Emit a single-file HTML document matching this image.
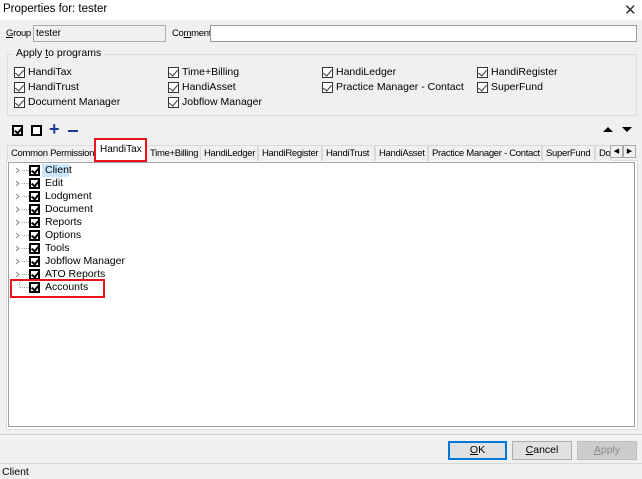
<!DOCTYPE html>
<html><head><style>
*{margin:0;padding:0;box-sizing:border-box}
body{width:642px;height:479px;background:#f0f0f0;font-family:"Liberation Sans",sans-serif;font-size:10.5px;color:#000;position:relative;overflow:hidden}
.a{position:absolute;white-space:nowrap}
.cb{position:absolute;width:11px;height:11px;border:1px solid #333;background:#fff}
.cb::after{content:"";position:absolute;left:2px;top:0px;width:4px;height:7px;border:solid #333;border-width:0 1px 1px 0;transform:rotate(40deg)}
.tc{position:absolute;width:11px;height:11px;border:2px solid #000;background:#fff}
.tc::after{content:"";position:absolute;left:2px;top:-1px;width:3px;height:6px;border:solid #000;border-width:0 2px 2px 0;transform:rotate(40deg)}
.tab{position:absolute;top:145px;height:16px;border:1px solid #d9d9d9;border-bottom:none;background:#f0f0f0;padding:2px 3px;font-size:9.5px;white-space:nowrap;overflow:hidden;letter-spacing:-0.3px}
.btn{position:absolute;top:441px;height:19px;border:1px solid #adadad;background:#e1e1e1;text-align:center;line-height:17px}
</style></head><body>
<div class="a" style="left:0;top:0;width:642px;height:20px;background:#fff"></div>
<div class="a" style="left:3px;top:3px;font-size:11.5px">Properties for: tester</div>
<div class="a" style="left:624px;top:1px;font-size:15px;color:#333">✕</div>

<div class="a" style="left:6px;top:28px;font-size:9.5px;letter-spacing:-0.3px"><u>G</u>roup</div>
<div class="a" style="left:33px;top:25px;width:133px;height:17px;border:1px solid #aaa;background:#f0f0f0;padding:2px 2px;font-size:10px">tester</div>
<div class="a" style="left:172px;top:28px;font-size:9.5px;letter-spacing:-0.3px">Co<u>m</u>ment</div>
<div class="a" style="left:210px;top:25px;width:427px;height:17px;border:1px solid #999;background:#fff"></div>

<div class="a" style="left:7px;top:54px;width:630px;height:62px;border:1px solid #dcdcdc"></div>
<div class="a" style="left:13px;top:47px;background:#f0f0f0;padding:0 3px">Apply <u>t</u>o programs</div>

<div class="cb" style="left:14px;top:67px"></div><div class="a" style="left:28px;top:66px">HandiTax</div>
<div class="cb" style="left:14px;top:82px"></div><div class="a" style="left:28px;top:81px">HandiTrust</div>
<div class="cb" style="left:14px;top:97px"></div><div class="a" style="left:28px;top:96px">Document Manager</div>
<div class="cb" style="left:168px;top:67px"></div><div class="a" style="left:182px;top:66px">Time+Billing</div>
<div class="cb" style="left:168px;top:82px"></div><div class="a" style="left:182px;top:81px">HandiAsset</div>
<div class="cb" style="left:168px;top:97px"></div><div class="a" style="left:182px;top:96px">Jobflow Manager</div>
<div class="cb" style="left:322px;top:67px"></div><div class="a" style="left:336px;top:66px">HandiLedger</div>
<div class="cb" style="left:322px;top:82px"></div><div class="a" style="left:336px;top:81px">Practice Manager - Contact</div>
<div class="cb" style="left:477px;top:67px"></div><div class="a" style="left:491px;top:66px">HandiRegister</div>
<div class="cb" style="left:477px;top:82px"></div><div class="a" style="left:491px;top:81px">SuperFund</div>

<div class="tc" style="left:12px;top:125px"></div>
<div class="a" style="left:31px;top:125px;width:11px;height:11px;border:2px solid #000;background:#fff"></div>
<div class="a" style="left:49px;top:119px;font-size:18px;font-weight:bold;color:#1a3a9a">+</div>
<div class="a" style="left:68px;top:130px;width:10px;height:2px;background:#1a3a9a"></div>
<svg class="a" style="left:603px;top:126px" width="30" height="8"><path d="M0 6 L5 1 L10 6Z M19 1 L29 1 L24 6Z" fill="#000"/></svg>

<div class="a" style="left:6px;top:160px;width:632px;height:270px;border:1px solid #dadada;background:#fff"></div>
<div class="a" style="left:8px;top:162px;width:627px;height:265px;border:1px solid #a0a0a0;background:#fff"></div>

<div class="tab" style="left:7px;width:89px">Common Permissions</div>
<div class="tab" style="left:146px;width:55px">Time+Billing</div>
<div class="tab" style="left:200px;width:58px">HandiLedger</div>
<div class="tab" style="left:258px;width:64px">HandiRegister</div>
<div class="tab" style="left:322px;width:53px">HandiTrust</div>
<div class="tab" style="left:375px;width:53px">HandiAsset</div>
<div class="tab" style="left:428px;width:114px">Practice Manager - Contact</div>
<div class="tab" style="left:542px;width:53px">SuperFund</div>
<div class="tab" style="left:595px;width:16px">Do</div>
<div class="a" style="left:610px;top:145px;width:13px;height:13px;border:1px solid #aaa;background:#f0f0f0;font-size:7px;text-align:center;line-height:11px">◀</div>
<div class="a" style="left:623px;top:145px;width:13px;height:13px;border:1px solid #aaa;background:#f0f0f0;font-size:7px;text-align:center;line-height:11px">▶</div>
<div class="a" style="left:96px;top:140px;width:50px;height:22px;background:#fff;padding:4px 4px;font-size:10px">HandiTax</div>
<div class="a" style="left:94px;top:138px;width:53px;height:24px;border:2px solid #e8141c"></div>

<div class="a" style="left:42px;top:164px;width:27px;height:13px;background:#cce8ff"></div>
<svg class="a" style="left:12px;top:164px" width="20" height="130"><g stroke="#888" fill="none"><path d="M4 4l3 2.5-3 2.5M4 17l3 2.5-3 2.5M4 30l3 2.5-3 2.5M4 43l3 2.5-3 2.5M4 56l3 2.5-3 2.5M4 69l3 2.5-3 2.5M4 82l3 2.5-3 2.5M4 95l3 2.5-3 2.5M4 108l3 2.5-3 2.5"/></g><g stroke="#a0a0a0" stroke-dasharray="1 1" fill="none"><path d="M10 6.5H17M10 19.5H17M10 32.5H17M10 45.5H17M10 58.5H17M10 71.5H17M10 84.5H17M10 97.5H17M10 110.5H17M7.5 116V123.5H17"/></g></svg>
<div class="tc" style="left:29px;top:165px"></div><div class="a" style="left:45px;top:164px">Client</div>
<div class="tc" style="left:29px;top:178px"></div><div class="a" style="left:45px;top:177px">Edit</div>
<div class="tc" style="left:29px;top:191px"></div><div class="a" style="left:45px;top:190px">Lodgment</div>
<div class="tc" style="left:29px;top:204px"></div><div class="a" style="left:45px;top:203px">Document</div>
<div class="tc" style="left:29px;top:217px"></div><div class="a" style="left:45px;top:216px">Reports</div>
<div class="tc" style="left:29px;top:230px"></div><div class="a" style="left:45px;top:229px">Options</div>
<div class="tc" style="left:29px;top:243px"></div><div class="a" style="left:45px;top:242px">Tools</div>
<div class="tc" style="left:29px;top:256px"></div><div class="a" style="left:45px;top:255px">Jobflow Manager</div>
<div class="tc" style="left:29px;top:269px"></div><div class="a" style="left:45px;top:268px">ATO Reports</div>
<div class="tc" style="left:29px;top:282px"></div><div class="a" style="left:45px;top:281px">Accounts</div>
<div class="a" style="left:10px;top:279px;width:95px;height:19px;border:2px solid #e8141c"></div>

<div class="a" style="left:0;top:434px;width:642px;height:1px;background:#d0d0d0"></div>
<div class="btn" style="left:448px;width:59px;border:2px solid #0078d7;line-height:15px"><u>O</u>K</div>
<div class="btn" style="left:512px;width:60px"><u>C</u>ancel</div>
<div class="btn" style="left:577px;width:60px;background:#cccccc;border-color:#bfbfbf;color:#8a8a8a"><u>A</u>pply</div>

<div class="a" style="left:0;top:463px;width:642px;height:1px;background:#d7d7d7"></div>
<div class="a" style="left:2px;top:466px">Client</div>
</body></html>
